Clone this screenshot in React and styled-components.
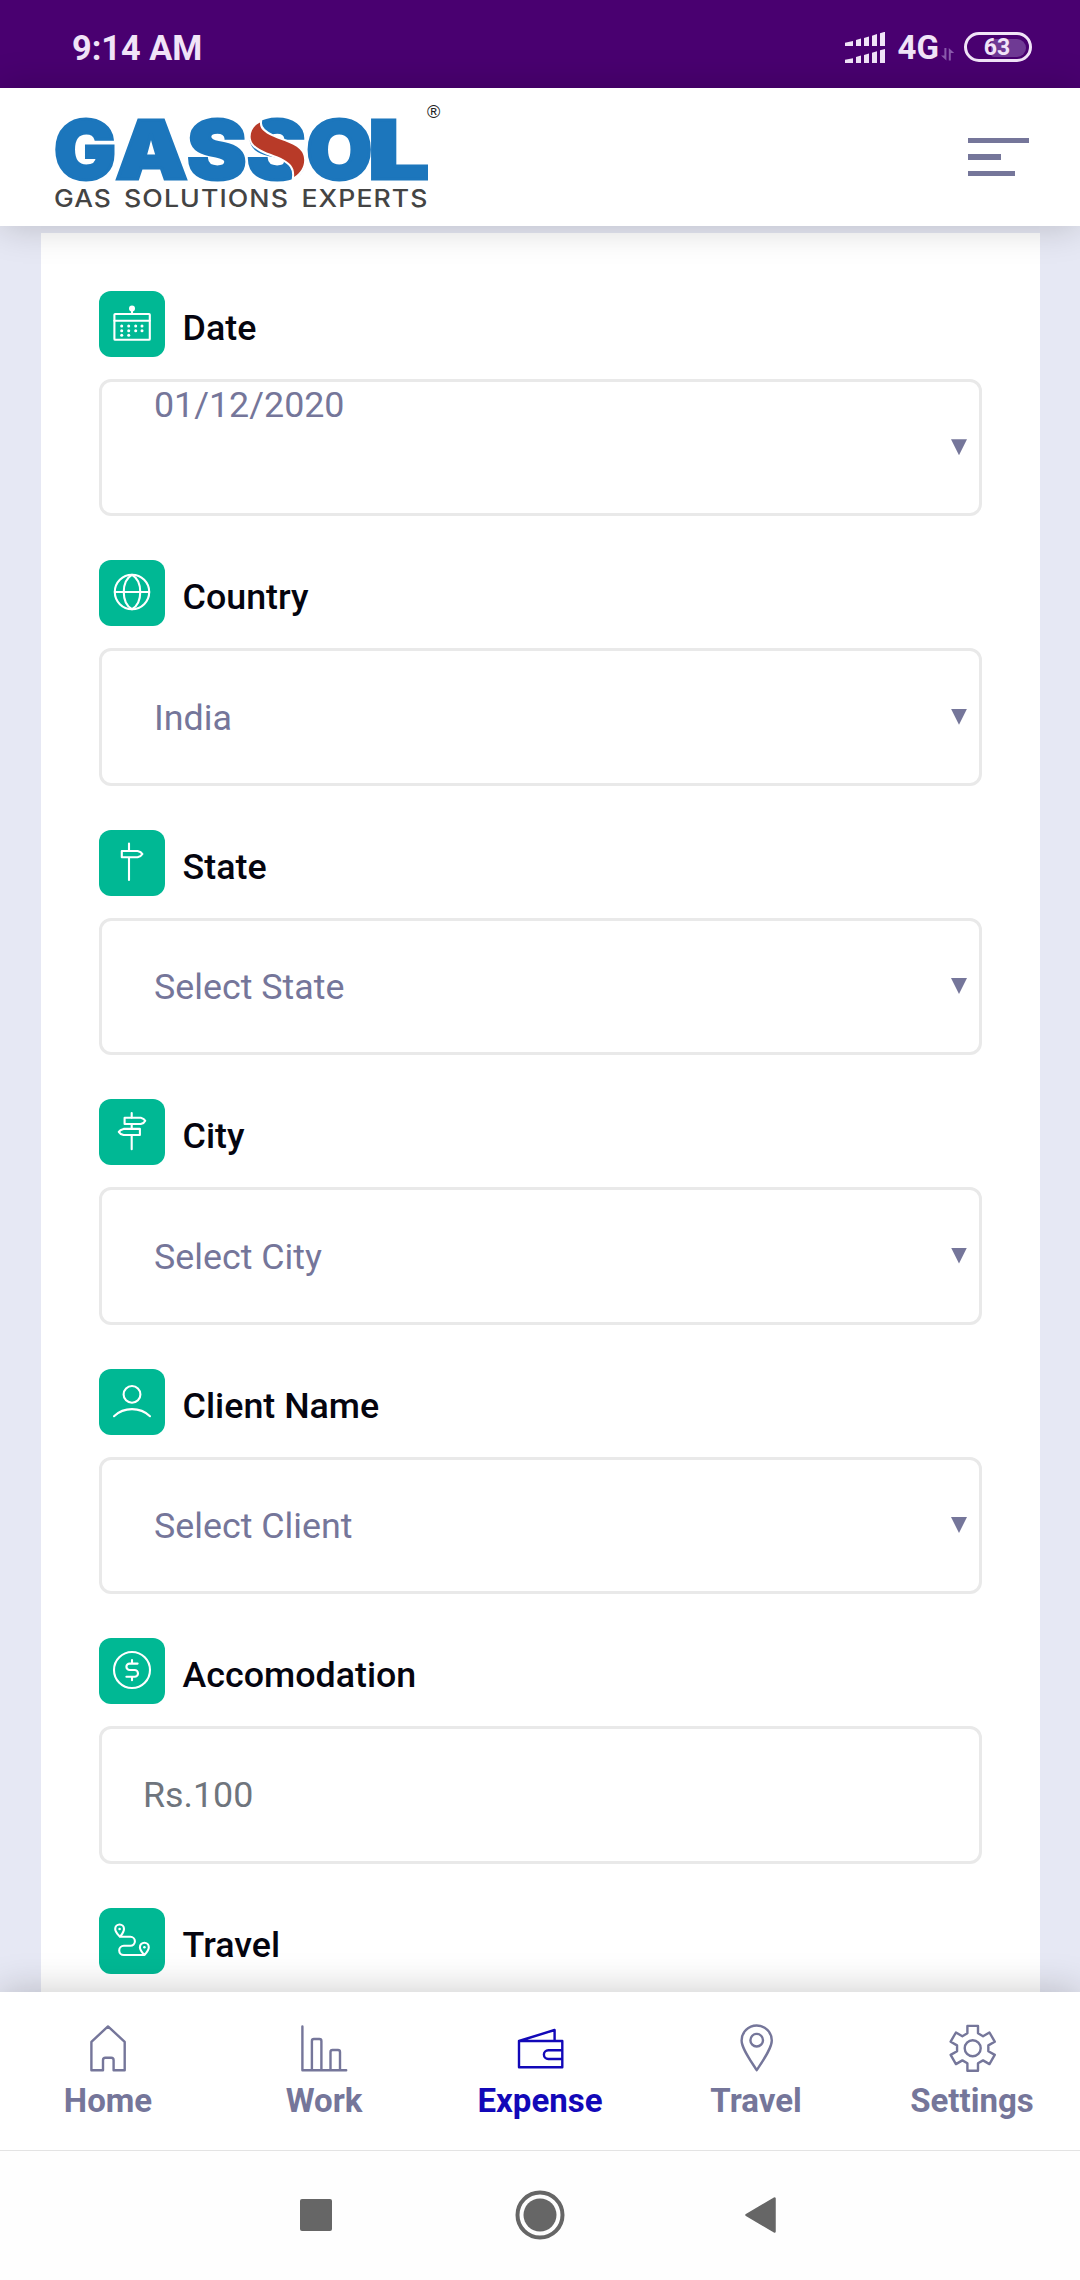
import React from 'react'
import styled, { createGlobalStyle } from 'styled-components'

const muted = '#75769a'
const accent = '#1208b8'
const green = '#00b894'

const GlobalStyle = createGlobalStyle`
  * {
    box-sizing: border-box;
  }
  body {
    margin: 0;
    background: #e6e8f4;
    font-family: Roboto, 'Liberation Sans', sans-serif;
  }
  svg {
    display: block;
    flex: none;
  }
`

const Screen = styled.div`
  width: 1080px;
  height: 2280px;
  display: flex;
  flex-direction: column;
  overflow: hidden;
`

/* status bar */
const StatusBar = styled.div`
  height: 88px;
  flex: none;
  background: #490070;
  color: #f1e4f8;
  display: flex;
  align-items: center;
  justify-content: space-between;
  padding: 8px 48px 0 72px;
`
const Clock = styled.div`
  font-size: 34.3px;
  font-weight: 700;
  line-height: 40px;
`
const StatusRight = styled.div`
  display: flex;
  align-items: center;
`
const Network = styled.div`
  margin-left: 13px;
  font-size: 33px;
  font-weight: 700;
  line-height: 40px;
`
const Arrows = styled.svg`
  margin: 12px 9px 0 2px;
`
const Battery = styled.div`
  width: 68px;
  height: 30px;
  border: 3px solid #f1e4f8;
  border-radius: 15px;
  padding: 3px;
  display: grid;
  align-items: center;
  justify-items: end;
  margin-top: -2px;
`
const Charge = styled.div`
  grid-area: 1 / 1;
  width: ${p => p.level}%;
  height: 18px;
  background: #6f3a94;
  border-radius: 3px 9px 9px 3px;
`
const Percent = styled.div`
  grid-area: 1 / 1;
  justify-self: center;
  margin-right: 2px;
  font-size: 23px;
  font-weight: 700;
  line-height: 20px;
`

/* header */
const Header = styled.header`
  height: 138px;
  flex: none;
  background: #fff;
  display: flex;
  align-items: center;
  justify-content: space-between;
  padding: 0 51px 0 48px;
  position: relative;
  z-index: 1;
  box-shadow: 0 0 36px rgba(0, 0, 0, 0.2);
`
const Menu = styled.button`
  border: 0;
  padding: 0;
  background: none;
  display: flex;
  flex-direction: column;
  gap: 11px;
  width: 61px;
`
const MenuLine = styled.span`
  width: ${p => p.width}px;
  height: ${p => p.height || 5}px;
  background: ${muted};
`

/* form */
const Content = styled.main`
  flex: 1;
  min-height: 0;
  overflow: hidden;
  padding: 7px 40px 0 41px;
`
const Card = styled.form`
  height: 1800px;
  background: #fff;
  padding: 58px 58px 0;
`
const Field = styled.div`
  height: 225.45px;
  margin-bottom: 44px;
`
const Label = styled.label`
  display: flex;
  align-items: flex-start;
  gap: 17.6px;
  height: 66px;
  margin-bottom: 22px;
  font-size: 35.8px;
  font-weight: 500;
  line-height: 75px;
  color: #05050f;
`
const Tile = styled.span`
  width: 66px;
  height: 66px;
  flex: none;
  border-radius: 12px;
  background: ${green};
`
const Box = styled.div`
  height: 137.4px;
  border: 3px solid #e9e9e9;
  border-radius: 12px;
  display: flex;
  align-items: ${p => (p.top ? 'flex-start' : 'center')};
  justify-content: space-between;
  padding: 0 12px 0 ${p => (p.plain ? 41 : 52)}px;
  font-size: 35.8px;
  line-height: 44px;
  color: ${p => (p.plain ? '#6f757d' : muted)};
`
const Value = styled.span`
  padding-top: 1px;
`
const Caret = styled.span`
  align-self: center;
  width: 16px;
  height: 16px;
  margin-bottom: 1px;
  background: ${muted};
  clip-path: polygon(0 0, 100% 0, 50% 100%);
`

/* bottom bar */
const Tabs = styled.nav`
  height: 158px;
  flex: none;
  background: #fff;
  display: grid;
  grid-template-columns: repeat(5, 1fr);
  position: relative;
  z-index: 1;
  box-shadow: 0 0 36px rgba(0, 0, 0, 0.22);
`
const Tab = styled.div`
  display: flex;
  flex-direction: column;
  align-items: center;
  padding-top: 32px;
  color: ${p => (p.active ? accent : muted)};
  font-size: 33px;
  font-weight: 700;
  line-height: 40px;
`
const TabLabel = styled.span`
  margin-top: 9px;
`
const SystemBar = styled.div`
  height: 130px;
  flex: none;
  border-top: 1px solid #e3e3e3;
  background: #fefefe;
  display: flex;
  align-items: center;
  padding: 0 0 2px 300px;
  position: relative;
  z-index: 2;
`
const Recents = styled.span`
  width: 32px;
  height: 32px;
  margin-right: 183px;
  border-radius: 2px;
  background: #666;
`
const HomeButton = styled.svg`
  margin-right: 180px;
`

const TileIcon = ({ children }) => (
  <svg
    width="66"
    height="66"
    viewBox="0 0 66 66"
    fill="none"
    stroke="#fff"
    strokeWidth="2.1"
    strokeLinecap="round"
    strokeLinejoin="round">
    {children}
  </svg>
)

const dots = [
  [22.7, 35], [29.7, 35], [36.7, 35], [43, 35],
  [22.7, 39.7], [29.7, 39.7], [36.7, 39.7], [43, 39.7],
  [22.7, 44.3], [29.7, 44.3]
]

const CalendarIcon = () => (
  <TileIcon>
    <rect x="15.4" y="23" width="35.4" height="25.8" rx="0.8" />
    <path d="M15.4 29.7H50.8M33 19V23" />
    <circle cx="33" cy="17.5" r="3" fill="#fff" stroke="none" />
    {dots.map(([x, y]) => (
      <circle key={`${x}-${y}`} cx={x} cy={y} r="1.5" fill="#fff" stroke="none" />
    ))}
  </TileIcon>
)
const GlobeIcon = () => (
  <TileIcon>
    <circle cx="33" cy="32" r="17.2" />
    <path d="M15.8 32H50.2M33 14.8C22 21 22 43 33 49.2M33 14.8C44 21 44 43 33 49.2" />
  </TileIcon>
)
const StateIcon = () => (
  <TileIcon>
    <path d="M30 13.6V20.6M30 27.6V50M22.8 21H38.6C41 21.6 42.6 22.7 43.4 24C42.6 25.4 41 26.6 38.6 27.3H22.8Z" />
  </TileIcon>
)
const CityIcon = () => (
  <TileIcon>
    <path d="M32.7 14V18.6M32.7 25V30M32.7 36V50.2" />
    <path d="M25.6 18.8H41.8C44 19.4 45.6 20.5 46.2 21.8C45.6 23.2 44 24.4 41.8 25H25.6Z" />
    <path d="M40.9 29.9H24.6C22.2 30.5 20.6 31.6 19.8 32.9C20.6 34.3 22.2 35.4 24.6 36H40.9Z" />
  </TileIcon>
)
const PersonIcon = () => (
  <TileIcon>
    <circle cx="33" cy="25.4" r="8.4" />
    <path d="M15 47.2C25 37.8 41 37.8 51 47.2" />
  </TileIcon>
)
const DollarIcon = () => (
  <TileIcon>
    <circle cx="33" cy="32" r="18" />
    <path d="M33 22V25.4M33 38.8V42.2M38.6 25.6H30.6A3.2 3.2 0 0 0 30.6 32H35.6A3.4 3.4 0 0 1 35.6 38.8H27.4" />
  </TileIcon>
)
const RouteIcon = () => (
  <TileIcon>
    <path d="M21 28.8C18.6 26 16.2 23.8 16.2 20.9A4.4 4.4 0 0 1 25 20.9C25 23.8 23 26 21 28.8H31.4A4.4 4.4 0 0 1 31.4 37.8H24.8A4.6 4.6 0 0 0 24.8 47H45.4C43 44.4 40.9 42 40.9 39.2A4.4 4.4 0 0 1 49.8 39.2C49.8 42 47.8 44.4 45.4 47" />
    <circle cx="20.6" cy="21" r="1.3" fill="#fff" stroke="none" />
    <circle cx="45.4" cy="39.2" r="1.3" fill="#fff" stroke="none" />
  </TileIcon>
)

const TabIcon = ({ children }) => (
  <svg
    width="48"
    height="48"
    viewBox="0 0 48 48"
    fill="none"
    stroke="currentColor"
    strokeWidth="2.4"
    strokeLinecap="round"
    strokeLinejoin="round">
    {children}
  </svg>
)

const HomeIcon = () => (
  <TabIcon>
    <path d="M24 2.4L40.7 17.8V46.2H29.6V36.2A2.4 2.4 0 0 0 27.2 33.8H21.4A2.4 2.4 0 0 0 19 36.2V46.2H7.4V17.8Z" />
  </TabIcon>
)
const ChartIcon = () => (
  <TabIcon>
    <path d="M2.4 2.4V46.2H46.2M11.9 46V17A2 2 0 0 1 13.9 15H19.4A2 2 0 0 1 21.4 17V46M30.5 46V28A2 2 0 0 1 32.5 26H38A2 2 0 0 1 40 28V46" />
  </TabIcon>
)
const WalletIcon = () => (
  <TabIcon>
    <path d="M3 17H46.3V43.2H3ZM3 17L38.6 6V17M46.3 26.2H32.3A4.4 4.4 0 0 0 32.3 35H46.3" />
  </TabIcon>
)
const PinIcon = () => (
  <TabIcon>
    <path d="M24.7 46.2C18 35.6 9.6 24 9.6 16.4A15.1 14.9 0 0 1 39.8 16.4C39.8 24 31.6 35.6 24.7 46.2Z" />
    <circle cx="24.7" cy="16.2" r="6.3" />
  </TabIcon>
)

const tooth = [[-5.3, -15], [-5.3, -22.4], [5.3, -22.4], [5.3, -15]]
const gear = [0, 60, 120, 180, 240, 300]
  .flatMap(deg => {
    const a = (deg * Math.PI) / 180
    return tooth.map(([x, y]) => [
      24.7 + x * Math.cos(a) - y * Math.sin(a),
      24.3 + x * Math.sin(a) + y * Math.cos(a)
    ])
  })
  .map(p => p.map(n => n.toFixed(2)).join(','))
  .join(' ')

const GearIcon = () => (
  <TabIcon>
    <polygon points={gear} />
    <circle cx="24.7" cy="24.3" r="8" />
  </TabIcon>
)

const letters = [
  ['G', 54, 62],
  ['A', 115.5, 72],
  ['S', 187.3, 59],
  ['S', 247, 59],
  ['O', 306.3, 66],
  ['L', 368, 61]
]

const words = [
  ['GAS', 54, 58],
  ['SOLUTIONS', 124, 165],
  ['EXPERTS', 301.5, 127]
]

const Logo = () => (
  <svg width="400" height="138" viewBox="48 88 400 138">
    <g
      fontFamily="Inter, Roboto, sans-serif"
      fontSize="81"
      fontWeight="900"
      fill="#1c76bc"
      stroke="#1c76bc"
      strokeWidth="3">
      {letters.map(([char, x, width]) => (
        <text key={x} x={x} y="178.8" textLength={width} lengthAdjust="spacingAndGlyphs">
          {char}
        </text>
      ))}
    </g>
    <path
      d="M260 122.5C252 126 248 136 252.5 143C258 151 272 154 281 158C291 163 295 168 294 177C303 172 307 161 302 152C297 144 283 141 273 136.5C263 132 259.5 128 260 122.5Z"
      fill="#b83a28"
      stroke="#fff"
      strokeWidth="4"
      paintOrder="stroke"
    />
    <g fontFamily="Inter, Roboto, sans-serif" fontSize="24.4" fontWeight="550" fill="#444">
      {words.map(([word, x, width]) => (
        <text
          key={word}
          x={x}
          y="207"
          letterSpacing="1"
          textLength={width}
          lengthAdjust="spacingAndGlyphs">
          {word}
        </text>
      ))}
    </g>
    <text x="427" y="117.6" fontFamily="Liberation Sans, sans-serif" fontSize="18" fill="#222">
      ®
    </text>
  </svg>
)

const bars = [
  [845, 8, 41.7],
  [856, 5, 39],
  [864, 5, 37],
  [872, 5, 34.7],
  [880, 5, 32.3]
]

const Signal = () => (
  <svg width="40" height="32" viewBox="845 32 40 32" fill="#f1e4f8">
    {bars.map(([x, w, y]) => (
      <React.Fragment key={x}>
        <path d={`M${x} ${y + 1}L${x + w} ${y - 0.6}V46H${x}Z`} />
        <path d={`M${x} ${y + 18}L${x + w} ${y + 16.6}V63H${x}Z`} />
      </React.Fragment>
    ))}
  </svg>
)

const fields = [
  { label: 'Date', value: '01/12/2020', icon: CalendarIcon, top: true },
  { label: 'Country', value: 'India', icon: GlobeIcon },
  { label: 'State', value: 'Select State', icon: StateIcon },
  { label: 'City', value: 'Select City', icon: CityIcon },
  { label: 'Client Name', value: 'Select Client', icon: PersonIcon },
  { label: 'Accomodation', value: 'Rs.100', icon: DollarIcon, plain: true },
  { label: 'Travel', value: '', icon: RouteIcon, plain: true }
]

const tabs = [
  { label: 'Home', icon: HomeIcon },
  { label: 'Work', icon: ChartIcon },
  { label: 'Expense', icon: WalletIcon, active: true },
  { label: 'Travel', icon: PinIcon },
  { label: 'Settings', icon: GearIcon }
]

const App = () => (
  <Screen>
    <GlobalStyle />
    <StatusBar>
      <Clock>9:14 AM</Clock>
      <StatusRight>
        <Signal />
        <Network>4G</Network>
        <Arrows width="14" height="13" viewBox="0 0 14 13" fill="#8a5aac">
          <path d="M3.4 0H5.4V12.6L0 7.6H3.4ZM7.8 0L13.2 5H9.8V12.6H7.8Z" />
        </Arrows>
        <Battery>
          <Charge level={63} />
          <Percent>63</Percent>
        </Battery>
      </StatusRight>
    </StatusBar>
    <Header>
      <Logo />
      <Menu>
        <MenuLine width={61} />
        <MenuLine width={33} height={6} />
        <MenuLine width={47} />
      </Menu>
    </Header>
    <Content>
      <Card>
        {fields.map(({ label, value, icon: Icon, top, plain }) => (
          <Field key={label}>
            <Label>
              <Tile>
                <Icon />
              </Tile>
              {label}
            </Label>
            <Box top={top} plain={plain}>
              <Value>{value}</Value>
              {!plain && <Caret />}
            </Box>
          </Field>
        ))}
      </Card>
    </Content>
    <Tabs>
      {tabs.map(({ label, icon: Icon, active }) => (
        <Tab key={label} active={active}>
          <Icon />
          <TabLabel>{label}</TabLabel>
        </Tab>
      ))}
    </Tabs>
    <SystemBar>
      <Recents />
      <HomeButton width="50" height="50" viewBox="0 0 50 50">
        <circle cx="25" cy="25" r="22.5" fill="none" stroke="#666" strokeWidth="4" />
        <circle cx="25" cy="25" r="16.5" fill="#666" />
      </HomeButton>
      <svg width="31" height="36" viewBox="0 0 31 36">
        <path
          d="M1.5 18L29.5 1.5V34.5Z"
          fill="#666"
          stroke="#666"
          strokeWidth="2.5"
          strokeLinejoin="round"
        />
      </svg>
    </SystemBar>
  </Screen>
)

export default App
